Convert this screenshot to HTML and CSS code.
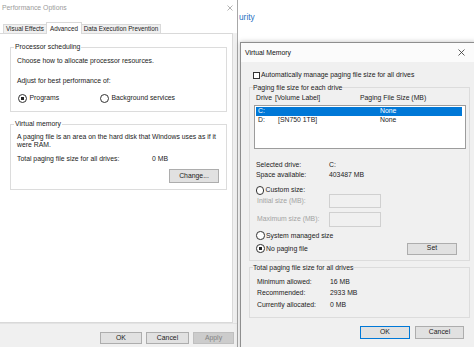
FILE: index.html
```html
<!DOCTYPE html>
<html lang="en">
<head>
  <meta charset="UTF-8" />
  <title>Performance Options</title>
  <link rel="stylesheet" href="styles.css">
</head>
<body>
  <div class="desk">
    <!-- Settings window sitting behind both dialogs -->
    <div class="behind"><span class="crumb">urity</span></div>

    <!-- Performance Options dialog -->
    <section class="win perf">
      <header class="titlebar">
        <span>Performance Options</span>
        <svg class="close" width="6" height="6" viewBox="0 0 6 6"><path d="M0.5 0.5L5.5 5.5M5.5 0.5L0.5 5.5" /></svg>
      </header>
      <nav class="tabs">
        <span class="tab t1">Visual Effects</span>
        <span class="tab t2 active">Advanced</span>
        <span class="tab t3">Data Execution Prevention</span>
      </nav>
      <div class="page">
        <fieldset class="group sched">
          <legend>Processor scheduling</legend>
          <p>Choose how to allocate processor resources.</p>
          <p class="adjust">Adjust for best performance of:</p>
          <div class="radios">
            <span class="radio on programs">Programs</span>
            <span class="radio">Background services</span>
          </div>
        </fieldset>
        <fieldset class="group vmem">
          <legend>Virtual memory</legend>
          <p class="para">A paging file is an area on the hard disk that Windows uses as if it<br>were RAM.</p>
          <div class="total"><span class="total-label">Total paging file size for all drives:</span><span>0 MB</span></div>
          <button class="btn change">Change...</button>
        </fieldset>
      </div>
      <footer class="actions">
        <button class="btn ok">OK</button>
        <button class="btn cancel">Cancel</button>
        <button class="btn apply" disabled>Apply</button>
      </footer>
    </section>

    <!-- Virtual Memory dialog -->
    <section class="win vm">
      <header class="vm-title">
        <span>Virtual Memory</span>
        <svg class="close" width="7" height="7" viewBox="0 0 7 7"><path d="M0.5 0.5L6.5 6.5M6.5 0.5L0.5 6.5" /></svg>
      </header>
      <div class="vm-body">
        <div class="check"><span class="box"></span>Automatically manage paging file size for all drives</div>

        <fieldset class="group drives">
          <legend>Paging file size for each drive</legend>
          <div class="list-head">
            <span class="h-drive">Drive</span><span class="h-label">[Volume Label]</span><span>Paging File Size (MB)</span>
          </div>
          <ul class="list">
            <li class="sel"><span class="c-drive">C:</span><span class="c-label"></span><span>None</span></li>
            <li><span class="c-drive">D:</span><span class="c-label">[SN750 1TB]</span><span>None</span></li>
          </ul>
          <div class="info">
            <div class="info-row"><span class="info-label">Selected drive:</span><span>C:</span></div>
            <div class="info-row"><span class="info-label">Space available:</span><span>403487 MB</span></div>
          </div>
          <div class="radio custom">Custom size:</div>
          <div class="field initial"><span class="field-label">Initial size (MB):</span><span class="textbox"></span></div>
          <div class="field maximum"><span class="field-label">Maximum size (MB):</span><span class="textbox"></span></div>
          <div class="radio system">System managed size</div>
          <div class="nopage">
            <span class="radio on">No paging file</span>
            <button class="btn set">Set</button>
          </div>
        </fieldset>

        <fieldset class="group totals">
          <legend>Total paging file size for all drives</legend>
          <div class="sum-row"><span class="sum-label">Minimum allowed:</span><span>16 MB</span></div>
          <div class="sum-row"><span class="sum-label">Recommended:</span><span>2933 MB</span></div>
          <div class="sum-row"><span class="sum-label">Currently allocated:</span><span>0 MB</span></div>
        </fieldset>

        <div class="vm-actions">
          <button class="btn vm-ok">OK</button>
          <button class="btn vm-cancel">Cancel</button>
        </div>
      </div>
    </section>
  </div>
</body>
</html>
```

FILE: styles.css
```css
* {
  box-sizing: border-box;
}
body {
  margin: 0;
  font-family: "Liberation Sans", Arial, sans-serif;
  font-size: 6.85px;
  line-height: 10px;
  color: #1b1b1b;
}
p {
  margin: 0;
}
.desk {
  position: relative;
  width: 474px;
  height: 347px;
  overflow: hidden;
  background: #fff;
}
.behind {
  position: absolute;
  left: 238px;
  top: 0;
  right: 0;
  bottom: 0;
  background: #fff;
  padding: 12px 0 0 1px;
}
.crumb {
  color: #1f6fbf;
  font-size: 8.3px;
}
.win {
  position: absolute;
  display: flex;
  flex-direction: column;
}
.close {
  display: block;
  fill: none;
  stroke-width: 0.8;
}

/* Performance Options */
.perf {
  left: 0;
  top: 0;
  width: 238px;
  height: 347px;
  background: #f0f0f0;
  border-right: 1px solid #a8a8a8;
}
.titlebar {
  height: 17px;
  background: #fff;
  color: #9b9b9b;
  display: flex;
  align-items: center;
  justify-content: space-between;
  padding: 0 4px 2px 2px;
}
.titlebar .close {
  stroke: #a0a0a0;
}
.tabs {
  height: 16px;
  display: flex;
  align-items: flex-end;
  padding-left: 3px;
  background: #fff;
}
.tab {
  height: 9px;
  line-height: 8px;
  font-size: 6.3px;
  text-align: center;
  white-space: nowrap;
  background: #f0f0f0;
  border: 1px solid #d9d9d9;
  border-bottom: none;
}
.t1 {
  width: 44px;
}
.t2 {
  width: 36px;
  margin-left: -1px;
}
.t3 {
  width: 80px;
  margin-left: -1px;
}
.tab.active {
  height: 12px;
  line-height: 9px;
  padding-top: 0.5px;
  margin-bottom: -1px;
  background: #fff;
  position: relative;
  z-index: 1;
}
.page {
  flex: 1;
  background: #fff;
  border: 1px solid #d9d9d9;
  border-left: none;
  margin-right: 4px;
  padding: 8px 5px 0 10px;
}
.group {
  margin: 0;
  padding: 4px 7px 8px 6px;
  border: 1px solid #dcdcdc;
  min-width: 0;
}
.group legend {
  padding: 0 1px;
  margin-left: -3px;
  line-height: 10px;
}
.adjust {
  margin-top: 10px;
}
.radios {
  display: flex;
  margin-top: 7px;
}
.radio {
  display: flex;
  align-items: center;
  gap: 2.5px;
  white-space: nowrap;
}
.radio::before {
  content: "";
  width: 7px;
  height: 7px;
  border: 1px solid #333;
  border-radius: 50%;
  background: #fff;
  flex: none;
}
.radio.on::before {
  background: radial-gradient(circle, #222 0 1.6px, #fff 1.9px);
}
.programs {
  width: 83px;
  padding-left: 1px;
}
.vmem {
  margin-top: 7px;
  padding-top: 4.25px;
  padding-bottom: 6px;
}
.para {
  line-height: 7.5px;
  white-space: nowrap;
}
.total {
  display: flex;
  margin-top: 5.75px;
}
.total-label {
  width: 135px;
}
.btn {
  font: inherit;
  color: #1b1b1b;
  background: #e1e1e1;
  border: 1px solid #adadad;
  padding: 0;
  line-height: 1;
}
.change {
  display: block;
  width: 50px;
  height: 14px;
  margin: 5px 0 0 auto;
}
.actions {
  height: 24px;
  display: flex;
  justify-content: flex-end;
  gap: 4px;
  padding: 8px 3px 0 0;
  border-top: 1px solid #e3e3e3;
}
.actions .btn {
  height: 12px;
}
.ok {
  width: 42px;
}
.cancel {
  width: 43px;
}
.apply {
  width: 41px;
  background: #cccccc;
  border-color: #bfbfbf;
  color: #838383;
}

/* Virtual Memory */
.vm {
  left: 240px;
  top: 42px;
  width: 236px;
  height: 310px;
  background: #f0f0f0;
  border: 1px solid #8e8e8e;
  box-shadow: 0 0 5px rgba(0, 0, 0, 0.25);
}
.vm-title {
  height: 19px;
  background: #fbfbfb;
  display: flex;
  align-items: center;
  justify-content: space-between;
  padding: 0 10px 0 4px;
  color: #111;
}
.vm-title .close {
  stroke: #333;
}
.vm-body {
  padding: 8px 5px 0 8px;
}
.check {
  display: flex;
  align-items: center;
  gap: 1px;
  margin-left: 4px;
  height: 10px;
}
.box {
  width: 7px;
  height: 7px;
  border: 1px solid #333;
  background: #fff;
}
.drives {
  margin-top: 2.5px;
  padding: 0 3px 5px 4px;
}
.drives legend,
.totals legend {
  margin-left: -1px;
  padding: 0;
}
.list-head {
  display: flex;
  line-height: 9px;
  padding-left: 2px;
}
.h-drive {
  width: 19px;
}
.h-label {
  width: 85px;
}
.list {
  list-style: none;
  margin: 3.5px 0 0;
  padding: 1px;
  height: 44px;
  background: #fff;
  border: 1px solid #9c9c9c;
}
.list li {
  display: flex;
  height: 8.5px;
  line-height: 8.5px;
  padding-left: 2px;
}
.list li.sel {
  background: #0078d7;
  color: #fff;
  margin-right: 2px;
}
.c-drive {
  width: 20px;
}
.c-label {
  width: 102px;
}
.info {
  margin-top: 11px;
}
.info-row,
.sum-row,
.field {
  display: flex;
  padding-left: 2px;
}
.info-label {
  width: 73px;
}
.custom {
  margin-top: 6px;
  line-height: 8px;
  padding-left: 1.5px;
  gap: 1.5px;
}
.radio.custom::before,
.radio.system::before,
.nopage .radio::before {
  width: 6.5px;
  height: 6.5px;
}
.field {
  height: 14.5px;
  align-items: center;
  color: #a3a3a3;
  padding-left: 3px;
}
.initial {
  margin-top: -1px;
}
.maximum {
  margin-top: 4px;
}
.field-label {
  width: 72px;
}
.textbox {
  width: 52px;
  height: 100%;
  border: 1px solid #d0d0d0;
}
.system {
  margin-top: 4px;
  padding-left: 2px;
  gap: 1.5px;
}
.nopage {
  display: flex;
  align-items: center;
  justify-content: space-between;
  height: 12px;
  margin-top: 2px;
  padding: 0 9px 0 2px;
}
.nopage .radio {
  gap: 1.5px;
}
.set {
  width: 50px;
  height: 12px;
}
.totals {
  margin-top: 2px;
  padding: 3.25px 3px 7px 4px;
}
.sum-row {
  line-height: 11.5px;
  padding-left: 3px;
}
.sum-label {
  width: 73px;
}
.vm-actions {
  display: flex;
  justify-content: flex-end;
  gap: 5px;
  margin-top: 7.25px;
  padding-right: 6px;
}
.vm-actions .btn {
  height: 13px;
}
.vm-ok {
  width: 50px;
  border-color: #0078d7;
}
.vm-cancel {
  width: 49px;
}
```
